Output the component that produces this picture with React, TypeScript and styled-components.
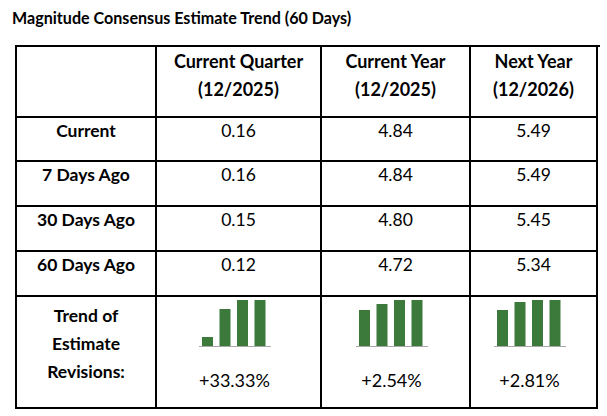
import styled, { createGlobalStyle } from 'styled-components';

const GlobalStyle = createGlobalStyle`
  html, body {
    margin: 0;
    padding: 0;
    background: #ffffff;
  }
  body {
    font-family: Lato, "Open Sans", "Liberation Sans", sans-serif;
    color: #000000;
  }
`

const Page = styled.div`
  width: 607px;
  height: 416px;
  padding: 7px 0 0 15px;
  box-sizing: border-box;
`

const Title = styled.h1`
  margin: 0 0 0 -3px;
  font-size: 16.1px;
  font-weight: 700;
  line-height: 22px;
  height: 38px;
`

const Table = styled.div`
  display: grid;
  grid-template-columns: 140px 165px 149px 127px;
  grid-template-rows: 71px 44px 45px 45px 45px 112px;
  width: 583px;
  border-left: 2px solid #000;
  border-top: 2px solid #000;
`

const Cell = styled.div<{ $head?: boolean; $top?: number; $lh?: number; $size?: number }>`
  border-right: 2px solid #000;
  border-bottom: 2px solid #000;
  display: flex;
  flex-direction: column;
  align-items: center;
  padding-top: ${p => p.$top ?? 0}px;
  font-size: ${p => p.$size ?? 17.5}px;
  line-height: ${p => p.$lh ?? 26}px;
  font-weight: ${p => (p.$head ? 700 : 400)};
  text-align: center;
  white-space: nowrap;
`

const TrendBox = styled.div`
  display: flex;
  flex-direction: column;
  align-items: center;
  padding-top: 2px;
  margin-right: 8px;
`

const Percent = styled.div`
  margin-top: 20px;
  font-size: 18px;
  line-height: 26px;
`

const TrendChart = ({ heights }: { heights: number[] }) => (
  <svg width="72" height="48" viewBox="0 0 72 48">
    {heights.map((h, i) => (
      <rect key={i} x={3 + i * 17.5} y={47 - h} width={11} height={h} fill="#3c7a3c" />
    ))}
    <line x1="0" y1="47.5" x2="72" y2="47.5" stroke="#a8a8a8" strokeWidth="1" />
  </svg>
)

const rows = [
  { label: 'Current', values: ['0.16', '4.84', '5.49'] },
  { label: '7 Days Ago', values: ['0.16', '4.84', '5.49'] },
  { label: '30 Days Ago', values: ['0.15', '4.80', '5.45'] },
  { label: '60 Days Ago', values: ['0.12', '4.72', '5.34'] },
]

const trends = [
  { heights: [9, 37, 46, 46], pct: '+33.33%' },
  { heights: [36, 42, 46, 46], pct: '+2.54%' },
  { heights: [36, 44, 46, 46], pct: '+2.81%' },
]

const App = () => {
  return (
    <>
      <GlobalStyle />
      <Page>
        <Title>Magnitude Consensus Estimate Trend (60 Days)</Title>
        <Table>
          <Cell $head />
          <Cell $head $top={-1} $lh={28} $size={18}><span>Current Quarter</span><span>(12/2025)</span></Cell>
          <Cell $head $top={-1} $lh={28} $size={18}><span>Current Year</span><span>(12/2025)</span></Cell>
          <Cell $head $top={-1} $lh={28} $size={18}><span>Next Year</span><span>(12/2026)</span></Cell>
          {rows.map(r => (
            <>
              <Cell key={r.label} $head>{r.label}</Cell>
              {r.values.map((v, i) => (
                <Cell key={r.label + i}>{v}</Cell>
              ))}
            </>
          ))}
          <Cell $head $top={5} $lh={28}>
            <span>Trend of</span>
            <span>Estimate</span>
            <span>Revisions:</span>
          </Cell>
          {trends.map(t => (
            <Cell key={t.pct}>
              <TrendBox>
                <TrendChart heights={t.heights} />
                <Percent>{t.pct}</Percent>
              </TrendBox>
            </Cell>
          ))}
        </Table>
      </Page>
    </>
  );
}

export default App;
